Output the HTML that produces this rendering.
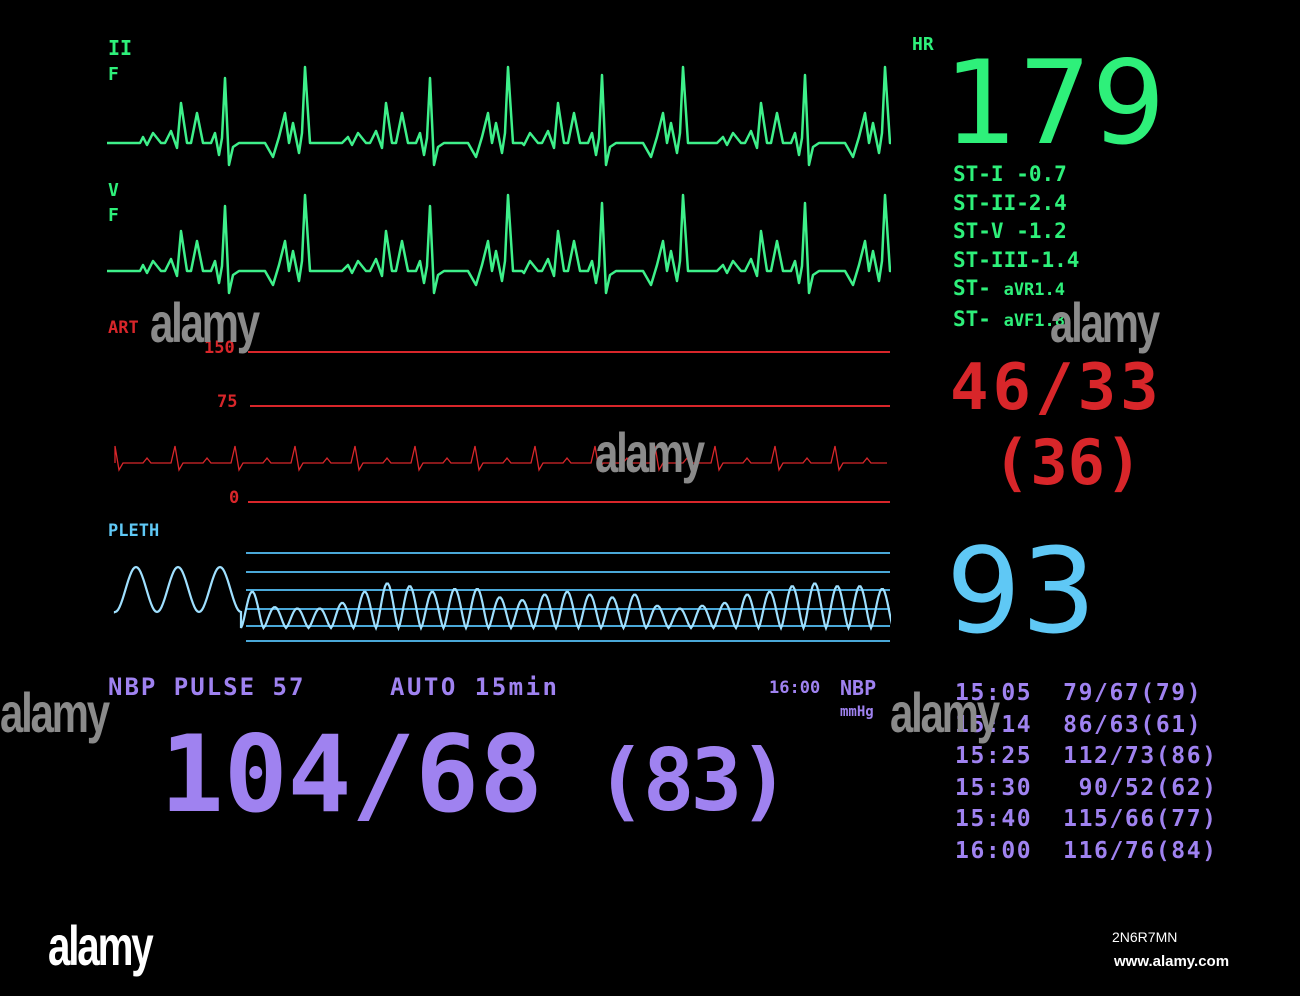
<!DOCTYPE html>
<html><head><meta charset="utf-8"><style>
html,body{margin:0;padding:0;background:#000;}
#w{position:relative;width:1300px;height:996px;background:#000;overflow:hidden;font-family:"DejaVu Sans Mono","Liberation Mono",monospace;font-weight:bold;}
.t{position:absolute;white-space:pre;line-height:1;}
.g{color:#2ef07a}.r{color:#d8262a}.b{color:#5fc8f5}.p{color:#9f82f0}
.wm{position:absolute;color:#8a8a8a;font-family:"Liberation Sans",sans-serif;font-weight:bold;}
</style></head><body><div id="w">
<svg id="s" width="1300" height="996" style="position:absolute;left:0;top:0">
<defs><clipPath id="c"><rect x="100" y="0" width="791" height="996"/></clipPath></defs>
<g stroke="#d8262a" stroke-width="2">
<line x1="248" y1="352" x2="890" y2="352"/><line x1="250" y1="406" x2="890" y2="406"/><line x1="248" y1="502" x2="890" y2="502"/>
</g>
<g stroke="#4aa8d8" stroke-width="2">
<line x1="246" y1="553" x2="890" y2="553"/><line x1="246" y1="572" x2="890" y2="572"/><line x1="246" y1="590" x2="890" y2="590"/><line x1="246" y1="609" x2="890" y2="609"/><line x1="246" y1="626" x2="890" y2="626"/><line x1="246" y1="641" x2="890" y2="641"/>
</g>
<g clip-path="url(#c)">
<path id="e1" fill="none" stroke="#3ef08a" stroke-width="2.5" stroke-linejoin="round"/>
<path id="e2" fill="none" stroke="#3ef08a" stroke-width="2.5" stroke-linejoin="round"/>
<path id="ar" fill="none" stroke="#d8262a" stroke-width="1.3"/>
<path id="pl" fill="none" stroke="#9fe0ff" stroke-width="2.2"/>
</g>
</svg>
<div class="t g" style="left:108px;top:38px;font-size:20px">II</div>
<div class="t g" style="left:108px;top:66px;font-size:18px">F</div>
<div class="t g" style="left:108px;top:182px;font-size:18px">V</div>
<div class="t g" style="left:108px;top:207px;font-size:18px">F</div>
<div class="t g" style="left:912px;top:36px;font-size:18px">HR</div>
<div class="t g" style="left:944px;top:46px;font-size:116px;font-family:'DejaVu Sans',sans-serif;font-weight:normal">179</div>
<div class="t g" style="left:953px;top:160px;font-size:21px;line-height:28.5px">ST-I -0.7
ST-II-2.4
ST-V -1.2
ST-III-1.4
ST- <span style="font-size:17px">aVR1.4</span>
ST- <span style="font-size:17px">aVF1.8</span></div>
<div class="t r" style="left:108px;top:320px;font-size:17px">ART</div>
<div class="t r" style="left:204px;top:340px;font-size:17px">150</div>
<div class="t r" style="left:217px;top:394px;font-size:17px">75</div>
<div class="t r" style="left:229px;top:490px;font-size:17px">0</div>
<div class="t r" style="left:950px;top:356px;font-size:64px;letter-spacing:4px">46/33</div>
<div class="t r" style="left:993px;top:432px;font-size:62px">(36)</div>
<div class="t b" style="left:108px;top:523px;font-size:17px">PLETH</div>
<div class="t b" style="left:946px;top:532px;font-size:118px;font-family:'DejaVu Sans',sans-serif;font-weight:normal">93</div>
<div class="t p" style="left:108px;top:675px;font-size:24px;letter-spacing:2px">NBP PULSE 57</div>
<div class="t p" style="left:390px;top:675px;font-size:24px;letter-spacing:2.5px">AUTO 15min</div>
<div class="t p" style="left:769px;top:680px;font-size:17px">16:00</div>
<div class="t p" style="left:840px;top:678px;font-size:20px">NBP</div>
<div class="t p" style="left:840px;top:705px;font-size:14px">mmHg</div>
<div class="t p" style="left:160px;top:722px;font-size:106px;letter-spacing:0px">104/68</div>
<div class="t p" style="left:595px;top:738px;font-size:86px;letter-spacing:-4px">(83)</div>
<div class="t p" style="left:955px;top:678px;font-size:23px;line-height:31.5px;letter-spacing:1.6px">15:05  79/67(79)
15:14  86/63(61)
15:25  112/73(86)
15:30   90/52(62)
15:40  115/66(77)
16:00  116/76(84)</div>
<div class="wm" style="left:150px;top:290px;font-size:56px;letter-spacing:-3px;transform:scaleX(.75);transform-origin:left">alamy</div>
<div class="wm" style="left:1050px;top:290px;font-size:56px;letter-spacing:-3px;transform:scaleX(.75);transform-origin:left">alamy</div>
<div class="wm" style="left:595px;top:420px;font-size:56px;letter-spacing:-3px;transform:scaleX(.75);transform-origin:left">alamy</div>
<div class="wm" style="left:0px;top:680px;font-size:56px;letter-spacing:-3px;transform:scaleX(.75);transform-origin:left">alamy</div>
<div class="wm" style="left:890px;top:680px;font-size:56px;letter-spacing:-3px;transform:scaleX(.75);transform-origin:left">alamy</div>
<div class="t" style="left:48px;top:918px;font-size:56px;color:#fff;font-family:'Liberation Sans',sans-serif;letter-spacing:-3px;transform:scaleX(.72);transform-origin:left">alamy</div>
<div class="t" style="left:1112px;top:930px;font-size:14px;color:#fff;font-family:'Liberation Sans',sans-serif;font-weight:normal">2N6R7MN</div>
<div class="t" style="left:1114px;top:954px;font-size:15px;color:#fff;font-family:'Liberation Sans',sans-serif">www.alamy.com</div>
</div>
<script>
function ecg(base,peaks){var pts=[[107,base],[140,base]];
 peaks.forEach(function(p,i){var x=p[0],h=p[1];var big=i%2==0;
  var T=big?[[-88,0],[-82,-6],[-78,2],[-72,-10],[-64,0],[-60,0],[-54,-12],[-48,5],[-44,-40],[-38,0],[-34,0],[-28,-30],[-22,0],[-14,0],[-10,-10],[-6,12],[-3,-5],[0,-h],[4,22],[8,4],[14,0]]
  :[[-40,0],[-32,14],[-26,-6],[-20,-30],[-16,0],[-12,-20],[-8,0],[-6,10],[-3,-10],[0,-h],[5,0],[14,0]];
  T.forEach(function(t){pts.push([x+t[0],base+t[1]]);});});
 pts.push([890,base]);
 var d="",lx=-1;pts.forEach(function(q){if(q[0]>lx){d+=(d?" L":"M")+q[0]+" "+q[1];lx=q[0];}});return d;}
var pk=[[225,65],[305,76],[430,65],[508,76],[602,68],[683,76],[805,68],[885,76]];
document.getElementById('e1').setAttribute('d',ecg(143,pk));
document.getElementById('e2').setAttribute('d',ecg(271,pk));
var a="M115 463";for(var x=115;x<=890;x+=4){var y=463;var m=(x-115)%60;if(m<4)y=446;else if(m<8)y=470;else if(m>30&&m<34)y=458;a+=" L"+x+" "+y;}
document.getElementById('ar').setAttribute('d',a);
var amp=[22,22,26,26,15,14,14,18,26,32,30,26,28,28,22,20,24,26,24,22,24,16,14,16,18,24,26,30,32,30,30,28,28,28];
var x=115,k=0;var s="M115 611";
while(x<895){var A=amp[k%amp.length];var per=(k<3)?42:22.5;for(var t=0;t<=per;t+=1.5){var ph=t/per;var y=628-A*Math.pow(Math.sin(Math.PI*ph),1.5)*1.4;if(k<3)y=612-45*Math.pow(Math.sin(Math.PI*ph),2);s+=" L"+(x+t).toFixed(1)+" "+y.toFixed(1);}x+=per;k++;}
document.getElementById('pl').setAttribute('d',s);
</script>
</body></html>
